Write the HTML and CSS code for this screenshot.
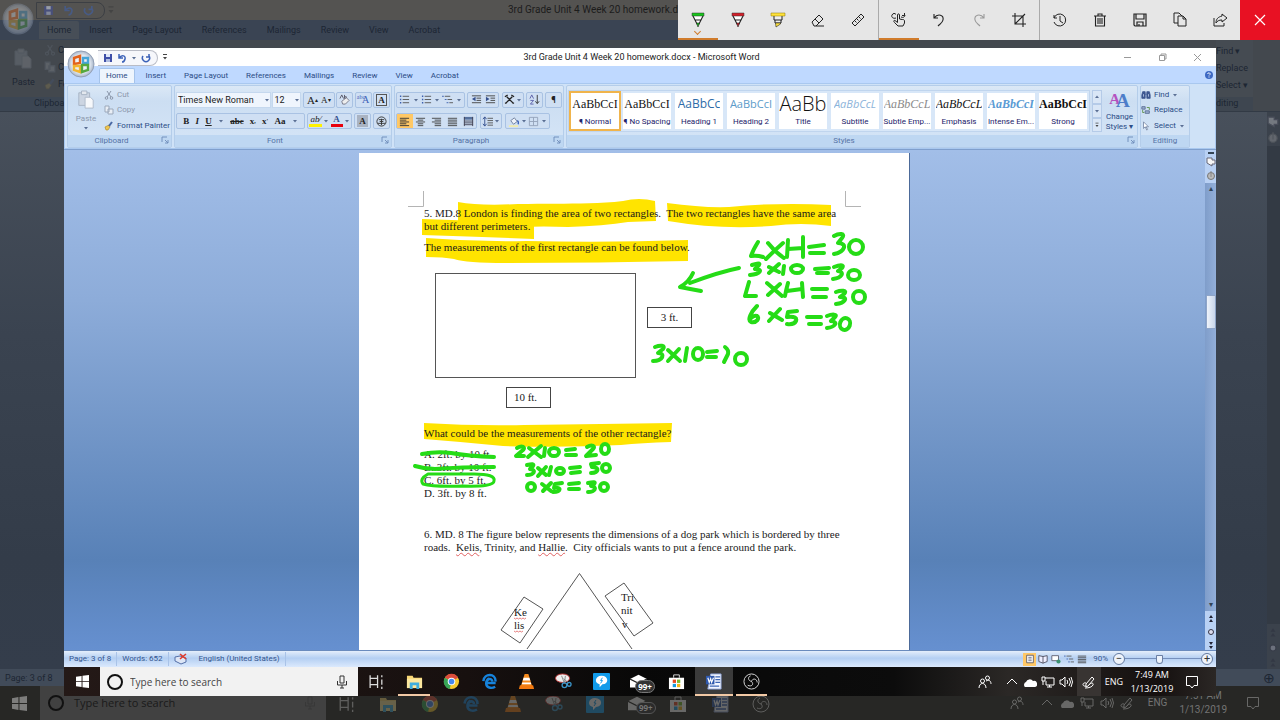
FILE: index.html
```html
<!DOCTYPE html>
<html lang="en">
<head>
<meta charset="utf-8">
<title>3rd Grade Unit 4 Week 20 homework.docx - Microsoft Word</title>
<link rel="stylesheet" href="styles.css">
</head>
<body>
<svg class="defs" aria-hidden="true">
  <defs>
    <radialGradient id="orb"><stop offset="0" stop-color="#fff"/><stop offset=".7" stop-color="#dfe6f0"/><stop offset="1" stop-color="#a9b6c9"/></radialGradient>
    <symbol id="office" viewBox="0 0 28 28"><circle cx="14" cy="14" r="13" fill="url(#orb)" stroke="#93a0b6"/><g fill="none" stroke-width="2.4"><path d="M7 8l6-2v7l-6 1z" stroke="#e3621c"/><path d="M16 8h5v5h-5z" stroke="#47a5d8"/><path d="M7 16h6v6l-6-2z" stroke="#f2b430"/><path d="M15 15h6v5l-6 2z" stroke="#55a83e"/></g></symbol>
    <symbol id="save" viewBox="0 0 10 10"><path d="M1 1h8v8H1z" fill="#3f4fa8"/><path d="M3 1h4v3H3z" fill="#dde6fa"/><path d="M3 6h4v3H3z" fill="#aebbe0"/></symbol>
    <symbol id="undo" viewBox="0 0 10 10"><path d="M2 1v4h4M2 5c3-4 7-2 6 1-.4 2-2 3-3 3" fill="none" stroke="#3c62b8" stroke-width="1.500"/></symbol>
    <symbol id="redo" viewBox="0 0 10 10"><path d="M2 3a3.600 3.600 0 1 0 6 0M8 1v3H5" fill="none" stroke="#3c62b8" stroke-width="1.500"/></symbol>
    <symbol id="more" viewBox="0 0 6 8"><path d="M1 1.500h4" stroke="#444"/><path d="M1 4h4l-2 2.500z" fill="#444"/></symbol>
    <symbol id="clip" viewBox="0 0 20 22"><path d="M2 3h12v14H2z" fill="#ccd5e2" stroke="#a6b2c3"/><path d="M5 1h6v4H5z" fill="#e3e8ee" stroke="#a6b2c3"/><path d="M9 8h6l3 3v9H9z" fill="#f6f8fb" stroke="#aeb9c8"/></symbol>
    <symbol id="cut" viewBox="0 0 10 10"><g fill="none" stroke="#8b97aa"><path d="M3 1l4 6M7 1L3 7"/><circle cx="2.500" cy="8" r="1.300"/><circle cx="7.500" cy="8" r="1.300"/></g></symbol>
    <symbol id="copy" viewBox="0 0 10 10"><g fill="#e9eef5" stroke="#9ba8ba"><path d="M1 1h4v6H1zM4 4h5v5H4z"/></g></symbol>
    <symbol id="brush" viewBox="0 0 10 10"><path d="M1 6l4-2 1 2-2 3H2z" fill="#efc652" stroke="#a88321" stroke-width=".6"/><path d="M5 5l3-4" stroke="#4968a4" stroke-width="2"/></symbol>
    <symbol id="launch" viewBox="0 0 8 8"><path d="M1 6V1h5M4 4l3 3M7 4v3H4" fill="none" stroke="#6c8ab8" stroke-width=".9"/></symbol>
    <symbol id="bullets" viewBox="0 0 12 12"><path d="M4 2.500h7M4 6h7M4 9.500h7" stroke="#555"/><path d="M1 2.500h1.500M1 6h1.500M1 9.500h1.500" stroke="#3b5fae" stroke-width="1.500"/></symbol>
    <symbol id="multi" viewBox="0 0 12 12"><path d="M3 2.500h6M6 6h5M8 9.500h4" stroke="#555"/><path d="M0 2.500h2M3 6h2M5 9.500h2" stroke="#3b5fae"/></symbol>
    <symbol id="outdent" viewBox="0 0 12 12"><path d="M1 2h10M6 4.500h5M6 7h5M1 9.500h10" stroke="#444"/><path d="M5 3v5L1 5.500z" fill="#35508e"/></symbol>
    <symbol id="indent" viewBox="0 0 12 12"><path d="M1 2h10M6 4.500h5M6 7h5M1 9.500h10" stroke="#444"/><path d="M1 3v5l4-2.500z" fill="#35508e"/></symbol>
    <symbol id="asian" viewBox="0 0 12 12"><path d="M1 3l3-2M8 1l3 2M2 10l7-7M3 3l7 7M1 10h2M9 10h2" stroke="#222" stroke-width="1.400"/></symbol>
    <symbol id="sort" viewBox="0 0 12 12"><path d="M1 5l2-4 2 4M1.500 7H5L1.500 11H5" fill="none" stroke="#5a5fa8"/><path d="M9 1v9M7 8l2 2.500L11 8" fill="none" stroke="#333"/></symbol>
    <symbol id="left" viewBox="0 0 12 12"><path d="M1 2.500h10M1 4.500h7M1 6.500h10M1 8.500h7M1 10.500h10" stroke="#333"/></symbol>
    <symbol id="center" viewBox="0 0 12 12"><path d="M1 2.500h10M3 4.500h6M1 6.500h10M3 8.500h6M3 10.500h6" stroke="#444"/></symbol>
    <symbol id="right" viewBox="0 0 12 12"><path d="M1 2.500h10M4 4.500h7M1 6.500h10M4 8.500h7M4 10.500h7" stroke="#444"/></symbol>
    <symbol id="just" viewBox="0 0 12 12"><path d="M1 2.500h10M1 4.500h10M1 6.500h10M1 8.500h10M1 10.500h10" stroke="#444"/></symbol>
    <symbol id="sheet" viewBox="0 0 12 12"><path d="M2 1.500h8v9H2z" fill="#fff" stroke="#556"/><path d="M4 4h4M4 6h4M4 8h4" stroke="#667"/></symbol>
    <symbol id="dist" viewBox="0 0 12 12"><path d="M1 1h10v3H1z" fill="#55709d"/><path d="M1 5.500h10M1 7.500h10M1 9.500h10M1.500 1v10M10.500 1v10" stroke="#445"/></symbol>
    <symbol id="spacing" viewBox="0 0 12 12"><path d="M6 2.500h6M6 5h6M6 7.500h6M6 10h6" stroke="#555"/><path d="M3 1v10M1 3.500L3 1l2 2.500M1 8.500L3 11l2-2.500" fill="none" stroke="#35508e"/></symbol>
    <symbol id="fill" viewBox="0 0 12 12"><path d="M3 5l4-3 3 4-4 3z" fill="#eef2fa" stroke="#6f7f9c"/><path d="M10 5c2 1 1 4 1 4" stroke="#3c62b8" stroke-width="1.500" fill="none"/><path d="M1 11h10" stroke="#f0ebb0" stroke-width="2"/></symbol>
    <symbol id="grid" viewBox="0 0 12 12"><path d="M1.500 1.500h9v9h-9zM6 1.500v9M1.500 6h9" fill="none" stroke="#94a2ba"/></symbol>
    <symbol id="eraseA" viewBox="0 0 12 12"><path d="M1 5l2-4 2 4M6 1v4h2V3H6" fill="none" stroke="#556"/><path d="M3 8l5-4 3 3-4 4H4z" fill="#eee" stroke="#778"/></symbol>
    <symbol id="find" viewBox="0 0 12 12"><path d="M2 2h3v8H1V6zM7 2h3l1 4v4H7zM5 5h2" fill="#3c5790" stroke="#3c5790"/><path d="M3 5v3M9 5v3" stroke="#b7c8e6"/></symbol>
    <symbol id="replace" viewBox="0 0 12 12"><path d="M1 2h4v3H1zM5 7h5v3H5z" fill="#9cb0d2" stroke="#56698e"/><path d="M2 6v3h2M7 3h3v3" fill="none" stroke="#578c3e"/></symbol>
    <symbol id="cursor" viewBox="0 0 12 12"><path d="M3 1v8l2-2 2 4 1-1-2-3h3z" fill="#fff" stroke="#7787a5"/></symbol>
    <symbol id="circled" viewBox="0 0 12 12"><circle cx="6" cy="6" r="5" fill="none" stroke="#333"/><path d="M3 4h6M4 6h4M2 8h8M6 3v7" stroke="#333"/></symbol>

    <symbol id="pen" viewBox="0 0 16 16"><path d="M3 4l4 8h2l4-8M5 8h6" fill="#fff" stroke="#222" stroke-width="1.100"/><path d="M2 1h12v3H2z" fill="currentColor" stroke="#333" stroke-width=".5"/><path d="M6.500 11h3L8 15z" fill="currentColor" stroke="#222" stroke-width=".6"/></symbol>
    <symbol id="marker" viewBox="0 0 16 16"><path d="M4 4v4h8V4M5 8v3h6V8" fill="#eee" stroke="#222"/><path d="M1 1h14v3H1z" fill="#ffe23b" stroke="#8a7600" stroke-width=".5"/><path d="M5.500 11h5v1L6 15z" fill="#ffe23b" stroke="#222" stroke-width=".6"/></symbol>
    <symbol id="eraser" viewBox="0 0 16 16"><path d="M2 10l7-7 4 4-7 7H4zM5 7l4 4M6 14h8" fill="none" stroke="#222"/></symbol>
    <symbol id="ruler" viewBox="0 0 16 16"><path d="M2 11l9-9 3 3-9 9zM5 9l1.500 1.500M7 7l1.500 1.500M9 5l1.500 1.500" fill="none" stroke="#222"/></symbol>
    <symbol id="touch" viewBox="0 0 16 16"><path d="M6.500 10.500L4 8.500c-1.500-.5-1.500 1-.5 2L7 14h5l1.500-3V8.500c-.5-1-1.500-1-2.500-1L8.500 7V3c0-1.500-2-1.500-2 0zM5 6C2 7 0 5 1 3s3-2 4-.500M10 5c2 1 4 0 4-2M13.500 1v2.500H11" fill="none" stroke="#222"/></symbol>
    <symbol id="back" viewBox="0 0 16 16"><path d="M3 2v4h4M3 6c4-5 10-3 9 2-.6 3-3 4-5 6" fill="none" stroke="currentColor" stroke-width="1.100"/></symbol>
    <symbol id="crop" viewBox="0 0 16 16"><path d="M4 1v11h11M1 4h11v11M4 12L14 2" fill="none" stroke="#222" stroke-width="1.100"/></symbol>
    <symbol id="history" viewBox="0 0 16 16"><path d="M2 3v3h3M2 6a6 6 0 1 1 0 4M8 4v5l3 2" fill="none" stroke="#222"/></symbol>
    <symbol id="trash" viewBox="0 0 16 16"><path d="M2 4h12M6 4V2h4v2M3.500 4v10h9V4M6 6v6M8 6v6M10 6v6" fill="none" stroke="#222" stroke-width="1.100"/></symbol>
    <symbol id="disk" viewBox="0 0 16 16"><path d="M2 2h12v12H3l-1-1zM4 2v5h8V2M5 14v-4h6v4M7 14v-2" fill="none" stroke="#222" stroke-width="1.200"/></symbol>
    <symbol id="pages" viewBox="0 0 16 16"><path d="M6 4h5l3 3v7H6zM11 4v3h3M6 11H2V1h5l3 3" fill="none" stroke="#222"/></symbol>
    <symbol id="share" viewBox="0 0 16 16"><path d="M10 2l5 4-5 4V8c-3 0-5 1-6 3 0-4 2-6 6-7zM2 6v8h10v-3" fill="none" stroke="#222"/></symbol>
    <symbol id="x" viewBox="0 0 16 16"><path d="M3 3l10 10M13 3L3 13" stroke="currentColor" stroke-width="1.200"/></symbol>

    <symbol id="win" viewBox="0 0 14 14"><path d="M0 2l6-1v5.600H0zM7 .9L14 0v6.600H7zM0 7.500h6V13l-6-1zM7 7.500h7V14l-7-.9z" fill="#fff"/></symbol>
    <symbol id="ring" viewBox="0 0 18 18"><circle cx="9" cy="9" r="7" fill="none" stroke="#111" stroke-width="2"/></symbol>
    <symbol id="mic" viewBox="0 0 12 14"><path d="M4 1h4v7H4zM1.500 6v4h9V6M6 10v3M4 13h4" fill="none" stroke="#333"/></symbol>
    <symbol id="tasks" viewBox="0 0 16 16"><path d="M2 2v12M9 2v12M2 5h7M2 11h7M13 2v2M13 6v5M13 13v2" fill="none" stroke="#ddd" stroke-width="1.200"/></symbol>
    <symbol id="folder" viewBox="0 0 18 18"><path d="M1 3h6l1 2h9v11H1z" fill="#f8d775"/><path d="M1 6h16v10H1z" fill="#fce79e"/><path d="M4 10h10v7h-3v-4H7v4H4z" fill="#3faede"/></symbol>
    <symbol id="chrome" viewBox="0 0 18 18"><circle cx="9" cy="9" r="8" fill="#f6c92f"/><path d="M9 9L2 5a8 8 0 0 1 14 0z" fill="#dc4c3b"/><path d="M9 9L2 5a8 8 0 0 0 5 12z" fill="#37a456"/><circle cx="9" cy="9" r="4" fill="#fff"/><circle cx="9" cy="9" r="3" fill="#4688ef"/></symbol>
    <symbol id="edge" viewBox="0 0 18 18"><path d="M15.500 10.500H6C6 5 12 5.500 12 9M15 14.500c-4 2.500-9.500 1-9.500-3.500 0-3 1.500-4.500 3-5.500M2.500 8.500C3.500 0 15.500 0 15.500 9" fill="none" stroke="#1683dc" stroke-width="2.600"/></symbol>
    <symbol id="vlc" viewBox="0 0 18 18"><path d="M7 1h4l4 13H3z" fill="#f58a1c"/><path d="M6 5h6l1 3H5zM4.500 10h9l.6 2H4z" fill="#fff"/><path d="M2 13h14l1 4H1z" fill="#f27a11"/></symbol>
    <symbol id="snip" viewBox="0 0 18 18"><ellipse cx="8" cy="5.500" rx="7.500" ry="4.500" fill="#eee" stroke="#b33"/><path d="M7 3l3 8M11 3l-1 8M9 6l6 5" stroke="#888"/><circle cx="10" cy="13" r="2.500" fill="none" stroke="#3b94c8" stroke-width="1.400"/><circle cx="15" cy="12" r="2" fill="none" stroke="#3b94c8" stroke-width="1.400"/></symbol>
    <symbol id="bubble" viewBox="0 0 18 18"><rect width="18" height="18" rx="1" fill="#119bea"/><path d="M9 3c8 0 8 9 1 9l-3 3v-3C1 11 2 3 9 3z" fill="#fff"/><path d="M10 5L8 8h2l-2 3" stroke="#119bea" fill="none"/></symbol>
    <symbol id="mail" viewBox="0 0 20 18"><path d="M0 6l10-5 10 5v10H0z" fill="#fff"/><path d="M0 6l10 5 10-5" fill="none" stroke="#222" stroke-width="1.500"/></symbol>
    <symbol id="store" viewBox="0 0 18 18"><path d="M6 5V2h6v3" stroke="#ddd" fill="none"/><path d="M1 5h16v12H1z" fill="#fff"/><path d="M5 7h3.500v3.500H5z" fill="#e74b24"/><path d="M9.500 7H13v3.500H9.500z" fill="#79b92b"/><path d="M5 11.500h3.500V15H5z" fill="#179be0"/><path d="M9.500 11.500H13V15H9.500z" fill="#f4b715"/></symbol>
    <symbol id="word" viewBox="0 0 18 18"><path d="M6 1h11v16H3z" fill="#f4f7ff" stroke="#8da4d8"/><path d="M11 4h5M11 7h5M11 10h5M5 14h10" stroke="#3d66b5" stroke-width="1.300"/><path d="M1 3h9v9H1z" fill="#2f59ae"/><path d="M3 5l1.500 5L6 6l1 4 2-5" stroke="#fff" fill="none" stroke-width="1.200"/></symbol>
    <symbol id="obs" viewBox="0 0 18 18"><g fill="none" stroke="#ddd"><circle cx="9" cy="9" r="8"/><path d="M9 9c-4-1-4-5-1-6M9 9c1-4 6-3 6 1M9 9c3 3 0 6-4 4"/></g></symbol>
    <symbol id="people" viewBox="0 0 14 14"><g fill="none" stroke="#fff"><circle cx="4.500" cy="6" r="2"/><path d="M1 13c0-6 7-6 7 0"/><circle cx="9.500" cy="3" r="2"/><path d="M8 6c4-2 5 1 5 3"/></g></symbol>
    <symbol id="up" viewBox="0 0 14 14"><path d="M2 9l5-5 5 5" fill="none" stroke="#fff"/></symbol>
    <symbol id="cloud" viewBox="0 0 14 14"><path d="M2 12a3 3 0 0 1 1-5 4 4 0 0 1 7-1 3 3 0 0 1 2 6z" fill="#fff"/></symbol>
    <symbol id="net" viewBox="0 0 14 14"><path d="M4 3h9v7H5V6M6 12h5M8.500 10v2M1 2h3v4H1zM2 6v4" fill="none" stroke="#fff"/></symbol>
    <symbol id="sound" viewBox="0 0 14 14"><path d="M1 5h2l3-3v10L3 9H1zM8 5q1.500 2 0 4M10 3q3 4 0 8M12 2q3 5 0 10" fill="none" stroke="#fff"/></symbol>
    <symbol id="ink" viewBox="0 0 14 14"><path d="M4 9l6-7 2 2-6 7-2 1zM4 8C0 7 0 12 4 11M7 10c2-3 5-2 4 0s-4 3-8 3" fill="none" stroke="#fff"/></symbol>
    <symbol id="note" viewBox="0 0 14 14"><path d="M1.500 1.500h11v9H9l-2 2.500-2-2.500H1.500z" fill="none" stroke="#fff"/></symbol>
    <symbol id="dd" viewBox="0 0 6 6"><path d="M1 2h4L3 4.500z" fill="#5b6f94"/></symbol>
    <symbol id="rul" viewBox="0 0 10 10"><path d="M1 1h5v2h3v4H6v2L1 6z" fill="#f7f7f7" stroke="#667"/></symbol>
    <symbol id="ball" viewBox="0 0 10 10"><circle cx="5" cy="6" r="3.500" fill="#bbb" stroke="#777"/><path d="M5 1v6" stroke="#888"/></symbol>
    <symbol id="dbl" viewBox="0 0 10 10"><path d="M5 1l2 3H3zM5 5l2 3H3z" fill="#223"/></symbol>
    <symbol id="dot" viewBox="0 0 10 10"><circle cx="5" cy="5" r="2.500" fill="#dde" stroke="#334"/></symbol>
    <symbol id="proof" viewBox="0 0 14 12"><path d="M1 4l5-1 6 2v4l-5 2-6-3z" fill="#dde6f6" stroke="#5570a8"/><path d="M6 1l6 5M12 1L6 6" stroke="#e03a2a" stroke-width="1.600"/></symbol>
  </defs>
</svg>

<div class="backdrop" aria-hidden="true">
  <div class="b-title"><svg class="b-orb"><use href="#office"/></svg><span class="b-quick"><svg><use href="#save"/></svg><svg><use href="#undo"/></svg><svg><use href="#redo"/></svg></span><svg class="b-more"><use href="#more"/></svg><span class="b-name">3rd Grade Unit 4 Week 20 homework.d</span></div>
  <div class="b-tabs"><span class="on">Home</span><span>Insert</span><span>Page Layout</span><span>References</span><span>Mailings</span><span>Review</span><span>View</span><span>Acrobat</span></div>
  <div class="b-ribbon">
    <div class="b-clip"><div class="b-cliprow"><div class="b-paste"><svg><use href="#clip"/></svg>Paste</div><div class="b-list"><span><svg><use href="#cut"/></svg>C</span><span><svg><use href="#copy"/></svg>C</span><span><svg><use href="#brush"/></svg>Fo</span></div></div><div class="b-label">Clipboa</div></div>
    <div class="b-edit"><div class="b-list"><span>Find ▾</span><span>Replace</span><span>Select ▾</span></div><div class="b-label">diting</div></div>
  </div>
  <div class="b-work"><div class="b-scroll"><svg><use href="#rul"/></svg><svg><use href="#ball"/></svg><i></i><svg><use href="#dbl"/></svg><svg><use href="#dot"/></svg><svg><use href="#dbl"/></svg></div></div>
  <div class="b-status"><span>Page: 3 of 8</span><span class="b-plus">⊕</span></div>
  <div class="b-task">
    <span class="b-start"><svg><use href="#win"/></svg></span>
    <span class="b-search"><svg><use href="#ring"/></svg>Type here to search<svg class="b-mic"><use href="#mic"/></svg></span>
    <span class="b-apps"><svg><use href="#tasks"/></svg><svg><use href="#folder"/></svg><svg><use href="#chrome"/></svg><svg><use href="#edge"/></svg><svg><use href="#vlc"/></svg><svg><use href="#snip"/></svg><svg><use href="#bubble"/></svg><span class="b-mail"><svg><use href="#mail"/></svg><em>99+</em></span><svg><use href="#store"/></svg><svg><use href="#word"/></svg><svg><use href="#obs"/></svg></span>
    <span class="b-tray"><svg class="far"><use href="#people"/></svg><svg><use href="#up"/></svg><svg><use href="#cloud"/></svg><svg><use href="#net"/></svg><svg><use href="#sound"/></svg><svg><use href="#ink"/></svg><b>ENG</b><b class="b-clock">7:51 AM<br>1/13/2019</b><svg><use href="#note"/></svg></span>
  </div>
</div>

<main class="capture">
  <header class="title">
    <button class="orb" aria-label="Office"><svg><use href="#office"/></svg></button>
    <div class="quick"><button aria-label="Save"><svg><use href="#save"/></svg></button><button aria-label="Undo"><svg><use href="#undo"/></svg></button><svg class="dd"><use href="#dd"/></svg><button aria-label="Redo"><svg><use href="#redo"/></svg></button></div>
    <button class="custom" aria-label="Customize"><svg><use href="#more"/></svg></button>
    <h1>3rd Grade Unit 4 Week 20 homework.docx - Microsoft Word</h1>
    <div class="wbtns"><button aria-label="Minimize"><svg viewBox="0 0 9 9"><path d="M1 4.500h7"/></svg></button><button aria-label="Restore"><svg viewBox="0 0 9 9"><path d="M1.500 2.500h5v5h-5zM3 2.500V1h5v5H6.500"/></svg></button><button aria-label="Close"><svg viewBox="0 0 9 9"><path d="M1 1l7 7M8 1L1 8"/></svg></button></div>
  </header>
  <nav class="tabs"><button class="on">Home</button><button>Insert</button><button>Page Layout</button><button>References</button><button>Mailings</button><button>Review</button><button>View</button><button>Acrobat</button><button class="help" aria-label="Help"><svg viewBox="0 0 8 8"><circle cx="4" cy="4" r="4" fill="#3d69c4"/><path d="M2.500 3C3 1 6 2 5 3.500L4 4.500M4 5.500v1" fill="none" stroke="#fff"/></svg></button></nav>
  <section class="ribbon">
    <div class="group clipboard">
      <div class="body">
        <button class="paste"><svg><use href="#clip"/></svg>Paste<svg class="dd"><use href="#dd"/></svg></button>
        <div class="cmds"><button class="off"><svg><use href="#cut"/></svg>Cut</button><button class="off"><svg><use href="#copy"/></svg>Copy</button><button><svg><use href="#brush"/></svg>Format Painter</button></div>
      </div>
      <div class="label">Clipboard<svg><use href="#launch"/></svg></div>
    </div>
    <div class="group font">
      <div class="body rows">
        <div class="row">
          <span class="combo wide"><select aria-label="Font"><option>Times New Roman</option></select><svg class="dd"><use href="#dd"/></svg></span>
          <span class="combo size"><select aria-label="Font size"><option>12</option></select><svg class="dd"><use href="#dd"/></svg></span>
          <span class="set two"><button class="serif big">A<sup>▴</sup></button><button class="serif">A<sup>▾</sup></button></span>
          <span class="set one"><button aria-label="Clear formatting"><svg><use href="#eraseA"/></svg></button></span>
          <span class="set one"><button class="serif phon"><sup>abc</sup>A</button></span>
          <span class="set one"><button class="serif boxed">A</button></span>
        </div>
        <div class="row">
          <span class="set fmt"><button class="serif"><b>B</b></button><button class="serif"><i>I</i></button><button class="serif"><u>U</u></button><svg class="dd"><use href="#dd"/></svg><button class="serif"><s>abc</s></button><button class="serif">x<sub>,</sub></button><button class="serif">x<sup>'</sup></button><button class="serif">Aa</button><svg class="dd"><use href="#dd"/></svg></span>
          <span class="set cols"><button class="serif hl">ab⁄</button><svg class="dd"><use href="#dd"/></svg><button class="serif fc">A</button><svg class="dd"><use href="#dd"/></svg></span>
          <span class="set one"><button class="serif shade">A</button></span>
          <span class="set one"><button aria-label="Enclose characters"><svg><use href="#circled"/></svg></button></span>
        </div>
      </div>
      <div class="label">Font<svg><use href="#launch"/></svg></div>
    </div>
    <div class="group para">
      <div class="body rows">
        <div class="row">
          <span class="set lists"><button aria-label="Bullets"><svg><use href="#bullets"/></svg></button><svg class="dd"><use href="#dd"/></svg><button aria-label="Numbering"><svg><use href="#bullets"/></svg></button><svg class="dd"><use href="#dd"/></svg><button aria-label="Multilevel list"><svg><use href="#multi"/></svg></button><svg class="dd"><use href="#dd"/></svg></span>
          <span class="set two"><button aria-label="Decrease indent"><svg><use href="#outdent"/></svg></button><button aria-label="Increase indent"><svg><use href="#indent"/></svg></button></span>
          <span class="set mid"><button aria-label="Asian layout"><svg><use href="#asian"/></svg></button><svg class="dd"><use href="#dd"/></svg></span>
          <span class="set one"><button aria-label="Sort"><svg><use href="#sort"/></svg></button></span>
          <span class="set one"><button class="mark">¶</button></span>
        </div>
        <div class="row start">
          <span class="set align"><button class="sel" aria-label="Align left"><svg><use href="#left"/></svg></button><button aria-label="Center"><svg><use href="#center"/></svg></button><button aria-label="Align right"><svg><use href="#right"/></svg></button><button aria-label="Justify"><svg><use href="#just"/></svg></button><button aria-label="Distribute"><svg><use href="#dist"/></svg></button></span>
          <span class="set mid"><button aria-label="Line spacing"><svg><use href="#spacing"/></svg></button><svg class="dd"><use href="#dd"/></svg></span>
          <span class="set cols"><button aria-label="Shading"><svg><use href="#fill"/></svg></button><svg class="dd"><use href="#dd"/></svg><button aria-label="Borders"><svg><use href="#grid"/></svg></button><svg class="dd"><use href="#dd"/></svg></span>
        </div>
      </div>
      <div class="label">Paragraph<svg><use href="#launch"/></svg></div>
    </div>
    <div class="group styles">
      <div class="body">
        <div class="gallery">
          <button class="tile picked"><span class="sm serif">AaBbCcI</span>¶ Normal</button>
          <button class="tile"><span class="sm serif">AaBbCcI</span>¶ No Spacing</button>
          <button class="tile"><span class="sm h1">AaBbCc</span>Heading 1</button>
          <button class="tile"><span class="sm h2">AaBbCcI</span>Heading 2</button>
          <button class="tile"><span class="sm ttl">AaBb</span>Title</button>
          <button class="tile"><span class="sm sub">AaBbCcL</span>Subtitle</button>
          <button class="tile"><span class="sm serif subtle">AaBbCcL</span>Subtle Emp...</button>
          <button class="tile"><span class="sm serif emph">AaBbCcL</span>Emphasis</button>
          <button class="tile"><span class="sm serif intense">AaBbCcI</span>Intense Em...</button>
          <button class="tile"><span class="sm serif strong">AaBbCcI</span>Strong</button>
        </div>
        <div class="gscroll"><button aria-label="Previous styles"><svg class="dd flip"><use href="#dd"/></svg></button><button aria-label="Next styles"><svg class="dd"><use href="#dd"/></svg></button><button aria-label="More styles"><svg class="dd"><use href="#more"/></svg></button></div>
        <button class="change"><span class="aa serif"><i>A</i>A</span><span>Change<br>Styles ▾</span></button>
      </div>
      <div class="label">Styles<svg><use href="#launch"/></svg></div>
    </div>
    <div class="group editing">
      <div class="body"><div class="cmds"><button><svg><use href="#find"/></svg>Find<svg class="dd"><use href="#dd"/></svg></button><button><svg><use href="#replace"/></svg>Replace</button><button><svg><use href="#cursor"/></svg>Select<svg class="dd"><use href="#dd"/></svg></button></div></div>
      <div class="label">Editing</div>
    </div>
  </section>

  <section class="work">
    <div class="view">
      <article class="page">
        <svg class="under" viewBox="359 153 551 497" aria-hidden="true">
          <path d="M408 206.500h15.500V191M845.500 191v15.500H861" fill="none" stroke="#b4b4b4"/>
          <g fill="#ffe400">
            <path d="M458 202q22 4 60 2c40-1 70 1 105-3q16-4 32 0l1 20-28 1q-24 4-60 5-24-1-48 0l-62-6z"/>
            <path d="M422 219q56 2 112 3v17q-50-2-112-4z"/>
            <path d="M667 203q36 5 62 4 50-5 102-2v21q-30-4-60 0-50 4-103-5z"/>
            <path d="M426 238q50 4 100 3 80 2 162-1v21q-90 2-182 2-40 0-52-4-10-2-28-2z"/>
            <path d="M424 423q50 3 100 2 80-1 148-2l-1 19q-30 1-50 3-60 3-118 1-40-4-79-7z"/>
          </g>
        </svg>
        <p>5. MD.8 London is finding the area of two rectangles.&nbsp; The two rectangles have the same area<br>but different perimeters.</p>
        <p class="lead">The measurements of the first rectangle can be found below.</p>
        <div class="figure"><div class="rect"></div><div class="dim">3 ft.</div><div class="dim low">10 ft.</div></div>
        <p>What could be the measurements of the other rectangle?</p>
        <ul><li>A. 2ft. by 10 ft.</li><li>B. 3ft. by 10 ft.</li><li>C. 6ft. by 5 ft.</li><li>D. 3ft. by 8 ft.</li></ul>
        <p class="six">6. MD. 8 The figure below represents the dimensions of a dog park which is bordered by three<br>roads.&nbsp; <span class="sp">Kelis</span>, Trinity, and <span class="sp">Hallie</span>.&nbsp; City officials wants to put a fence around the park.</p>
        <svg class="park" viewBox="424 565 422 85">
          <g fill="none" stroke="#555"><path d="M527 650l52.500-75.500L632 650M524 598l19 12-23 34-19-13zM605 597l19-13 29 40-19 13z"/></g>
          <text x="514" y="617">Ke</text><text x="514" y="630">lis</text>
          <path d="M514 619l1.500 1 1.500-1 1.500 1 1.500-1 1.500 1 1.500-1 1.500 1 1.500-1M514 632l1.500 1 1.500-1 1.500 1 1.500-1 1.500 1 1.500-1" fill="none" stroke="#e06060" stroke-width=".8"/>
          <text x="621" y="602">Tri</text><text x="621" y="615">nit</text><text x="622" y="629">v</text>
        </svg>
        <svg class="over" viewBox="359 153 551 497" role="img" aria-label="Handwritten working in green ink">
          <g fill="none" stroke="#25dc16" stroke-width="4" stroke-linecap="round" stroke-linejoin="round">
            <path d="M758 242q-5 8-7 14 6-1 12 1M768 243q7 9 16 15M783 243q-8 7-17 16M788 240l-1 17M803 237v20M788 249l15-1M809 247l15-2M810 253h14M834 236c5-3 12-3 8 2l-4 5c10 0 7 9-4 11"/>
            <ellipse cx="856" cy="247" rx="7" ry="7"/>
            <path d="M752 265q9-3 7 0l-4 4c9 0 5 5-5 6M769 267l10 5M779 264l-10 9M784 266l-1 8M815 269l14-1M817 273h11M834 267c5-2 11-3 8 1l-4 3c7 1 4 7-5 8"/>
            <ellipse cx="797" cy="269" rx="6" ry="4"/><ellipse cx="854" cy="275" rx="6" ry="5"/>
            <path d="M749 282l-4 14h11M767 283l15 13M780 284l-12 11M788 283q-2 7-3 13M802 283l1 14M787 291l15-2M812 289h15M813 297h13M836 292c5-2 12-2 8 2l-4 3c9 0 5 6-4 7"/>
            <ellipse cx="859" cy="297" rx="6" ry="6"/>
            <path d="M757 306c-6 6-10 14-6 16 6 1 9-4 6-6q-3-1-6 2M770 313l12 7M780 309l-11 12M797 311l-9 1-1 5c8-1 10 1 9 4q-2 4-9 3M807 317h14M809 324h12M827 316c5-2 11-2 8 1l-4 4c8 1 4 6-4 7"/>
            <ellipse cx="845" cy="324" rx="5" ry="6" transform="rotate(20 845 324)"/>
            <path d="M739 268q-20 4-49 15M693 273q-4 9-13 14 10 2 21 4"/>
            <path d="M655 347c5-2 11-2 8 2l-5 4c8 0 5 8-5 8M668 350l12 11M679 349l-11 12M687 348l-2 13M707 352l10-1M707 357h9M725 347q4 3 3 7l-4 8"/>
            <ellipse cx="698" cy="354" rx="5" ry="6"/><ellipse cx="741" cy="359" rx="6" ry="6"/>
            <path d="M517 448c5-3 9-1 6 2l-7 6h8M529 448l12 9M541 446l-13 11M545 448l-1 8M566 450l9-1M566 455h10M587 447c5-3 9-1 6 2l-7 7 10-1"/>
            <ellipse cx="554" cy="452" rx="5" ry="4"/><ellipse cx="605" cy="449" rx="4" ry="5"/>
            <path d="M527 465q8-2 6 1l-3 3c7 1 4 6-3 6M538 468l8 7M546 467l-8 9M551 467l-2 8M570 468l10-1M571 473l9-1M599 463l-8 1 1 3c8 0 7 6-1 6"/>
            <ellipse cx="560" cy="471" rx="4" ry="3"/><ellipse cx="606" cy="468" rx="4" ry="4"/>
            <path d="M542 484l9 7M551 483l-8 8M562 483l-7 1-1 4c8-1 7 4-1 4M569 484l10-1M569 489h10M588 483q9-2 6 1l-3 2c7 1 4 6-3 6"/>
            <ellipse cx="531" cy="487" rx="4" ry="4"/><ellipse cx="604" cy="487" rx="4" ry="4"/>
            <path d="M422 454q15-3 29-1 17 3 43 4M415 466q10 3 20 3 26-2 59-2"/>
            <path stroke-width="3" d="M428 474q-9 5-5 10 10 3 40 2 31 1 31-5 2-7-20-7z"/>
          </g>
        </svg>
      </article>
    </div>
    <div class="scroll"><i class="split"></i><svg><use href="#rul"/></svg><svg><use href="#ball"/></svg><div class="track"><span>▴</span><i class="thumb"></i><span>▾</span></div><svg><use href="#dbl"/></svg><svg><use href="#dot"/></svg><svg class="flip"><use href="#dbl"/></svg></div>
  </section>

  <footer class="status">
    <span>Page: 3 of 8</span><span>Words: 652</span><span class="proof"><svg><use href="#proof"/></svg></span><span class="lang">English (United States)</span>
    <div class="views"><button class="sel" aria-label="Print layout"><svg><use href="#sheet"/></svg></button><button aria-label="Full screen reading"><svg viewBox="0 0 12 12"><path d="M1 2l5 1 5-1v7l-5 2-5-2zM6 3v8" fill="#eef" stroke="#445"/></svg></button><button aria-label="Web layout"><svg viewBox="0 0 12 12"><path d="M1 2h8v6H1z" fill="#fff" stroke="#556"/><circle cx="9" cy="9" r="2.500" fill="#3b9272"/></svg></button><button aria-label="Outline"><svg><use href="#multi"/></svg></button><button aria-label="Draft"><svg><use href="#just"/></svg></button></div>
    <label for="zoom">90%</label><button class="round">−</button><input id="zoom" type="range" min="10" max="190" value="92"><button class="round">+</button>
  </footer>

  <div class="taskbar">
    <button class="startb" aria-label="Start"><svg><use href="#win"/></svg></button>
    <label class="search"><svg><use href="#ring"/></svg><input type="text" placeholder="Type here to search" aria-label="Search"><svg class="mic"><use href="#mic"/></svg></label>
    <div class="apps"><button aria-label="Task view"><svg><use href="#tasks"/></svg></button><button class="open" aria-label="File Explorer"><svg><use href="#folder"/></svg></button><button aria-label="Chrome"><svg><use href="#chrome"/></svg></button><button aria-label="Edge"><svg><use href="#edge"/></svg></button><button aria-label="VLC"><svg><use href="#vlc"/></svg></button><button aria-label="Snipping Tool"><svg><use href="#snip"/></svg></button><button aria-label="Messenger"><svg><use href="#bubble"/></svg></button><button class="mailb" aria-label="Mail"><svg><use href="#mail"/></svg><em>99+</em></button><button aria-label="Store"><svg><use href="#store"/></svg></button><button class="open active" aria-label="Word"><svg><use href="#word"/></svg></button><button class="open" aria-label="OBS"><svg><use href="#obs"/></svg></button></div>
    <div class="tray"><svg class="far"><use href="#people"/></svg><svg><use href="#up"/></svg><svg><use href="#cloud"/></svg><svg><use href="#net"/></svg><svg><use href="#sound"/></svg><span class="inkbox"><svg><use href="#ink"/></svg></span><b>ENG</b><time>7:49 AM<br>1/13/2019</time><svg class="nt"><use href="#note"/></svg></div>
  </div>
</main>

<div class="tools" role="toolbar">
  <button class="on green" aria-label="Ballpoint pen"><svg><use href="#pen"/></svg><i></i></button><button class="red" aria-label="Pencil"><svg><use href="#pen"/></svg></button><button aria-label="Highlighter"><svg><use href="#marker"/></svg></button><button aria-label="Eraser"><svg><use href="#eraser"/></svg></button><button aria-label="Ruler"><svg><use href="#ruler"/></svg></button>
  <hr><button class="on" aria-label="Touch writing"><svg><use href="#touch"/></svg></button><button aria-label="Undo"><svg><use href="#back"/></svg></button><button class="dim-btn" aria-label="Redo"><svg><use href="#back"/></svg></button><button aria-label="Crop"><svg><use href="#crop"/></svg></button>
  <hr><button aria-label="History"><svg><use href="#history"/></svg></button><button aria-label="Delete"><svg><use href="#trash"/></svg></button><button aria-label="Save as"><svg><use href="#disk"/></svg></button><button aria-label="Copy"><svg><use href="#pages"/></svg></button><button aria-label="Share"><svg><use href="#share"/></svg></button><button class="shut" aria-label="Close"><svg><use href="#x"/></svg></button>
</div>
</body>
</html>
```
FILE: styles.css
```css
* { box-sizing: border-box; }
body {
  margin: 0; min-height: 100vh; padding: 48px 64px 24px; display: flex; overflow: hidden;
  position: relative; background: #3a4350;
  font: 8px/12px Roboto, "Noto Sans", sans-serif; color: #2b4c86;
}
button { appearance: none; border: 0; padding: 0; margin: 0; background: none; font: inherit; color: inherit; display: flex; align-items: center; justify-content: center; }
svg { display: block; flex: none; }
.defs { position: absolute; width: 0; height: 0; }
.serif { font-family: "Liberation Serif", serif; }
.dd { width: 6px; height: 6px; }

/* dimmed desktop behind the capture */
.backdrop { position: absolute; inset: 0; display: flex; flex-direction: column; background: #3a4350; color: #1d2633; font-size: 9px; }
.backdrop svg { opacity: .3; width: 12px; height: 12px; }
.b-title { height: 20px; display: flex; align-items: center; background: #545351; position: relative; padding-left: 36px; }
.backdrop .b-orb { position: absolute; left: 2px; top: 3px; width: 32px; height: 32px; opacity: .35; z-index: 1; }
.b-quick { display: flex; gap: 9px; width: 69px; height: 17px; padding-left: 6px; align-items: center; border: 1px solid #3c3f44; border-radius: 0 8px 8px 0; }
.backdrop .b-quick svg { width: 11px; height: 11px; opacity: .5; }
.backdrop .b-more { margin-left: 2px; width: 8px; height: 10px; opacity: 1; }
.b-name { margin-left: 393px; color: #1c1c1c; white-space: nowrap; font-size: 10px; }
.b-tabs { height: 20px; display: flex; align-items: center; background: #3a4453; padding-left: 39px; }
.b-tabs span { padding: 3px 10px; white-space: nowrap; }
.b-tabs .on { background: #474e57; padding: 3px 8px; border-radius: 2px 2px 0 0; }
.b-ribbon { height: 72px; background: #43484e; display: flex; justify-content: space-between; border-bottom: 1px solid #323a45; }
.b-clip { width: 118px; display: flex; flex-direction: column; justify-content: space-between; }
.b-cliprow { display: flex; padding: 4px 0 0 12px; gap: 9px; }
.b-paste { display: flex; flex-direction: column; align-items: center; gap: 6px; padding-top: 4px; }
.b-paste svg { width: 20px; height: 22px; }
.backdrop .b-paste svg, .backdrop .b-list svg { opacity: .15; }
.b-list { display: flex; flex-direction: column; gap: 5px; }
.b-list span { display: flex; gap: 2px; }
.b-label { background: #3c4653; height: 14px; padding-left: 34px; }
.b-edit { width: 37px; padding: 5px 0 0; margin-right: 27px; display: flex; flex-direction: column; justify-content: space-between; background: #454b52; }
.b-edit .b-label { background: #3e4650; padding-left: 0; }
.b-edit .b-list { white-space: nowrap; }
.b-work { flex: 1; display: flex; justify-content: flex-end; background: linear-gradient(#48505b, #3a4350 40%, #333c49 80%, #343d4b); }
.b-scroll { width: 13px; padding-top: 4px; display: flex; flex-direction: column; background: #3b424c; gap: 3px; }
.b-scroll i { flex: 1; background: #333a44; }
.b-status { height: 17px; display: flex; justify-content: space-between; align-items: center; background: #414b59; padding: 0 5px; }
.b-plus { font-size: 14px; }
.b-task { height: 34px; display: flex; background: #272725; color: #747474; align-items: flex-start; overflow: hidden; }
.b-start { width: 40px; height: 34px; padding: 10px 0 0 12px; }
.backdrop .b-start svg { width: 15px; height: 15px; opacity: .4; }
.b-search { width: 286px; height: 34px; background: #414141; display: flex; align-items: center; gap: 9px; padding: 0 10px 0 7px; font: 11px/14px "Open Sans", sans-serif; color: #1a1a1a; }
.backdrop .b-search svg { width: 18px; height: 18px; opacity: 1; }
.backdrop .b-search .b-mic { margin-left: auto; width: 12px; height: 14px; opacity: .6; }
.b-apps { display: flex; width: 456px; justify-content: space-around; height: 34px; padding-top: 9px; }
.backdrop .b-apps svg { width: 18px; height: 18px; }
.b-mail { position: relative; }
.b-mail em { position: absolute; left: 8px; top: 7px; padding: 0 2px; border: 1px solid #555; border-radius: 7px; background: #2b2b2b; font: bold 8px/10px "Open Sans", sans-serif; }
.b-tray { margin-left: auto; display: flex; gap: 6px; padding: 3px 20px 0 0; align-items: center; font-size: 10px; line-height: 14px; }
.backdrop .b-tray svg { width: 14px; height: 14px; }
.backdrop .b-tray .far { margin-right: 10px; }
.b-tray b { font-weight: 400; text-align: center; margin-left: 8px; }
.b-tray .b-clock { margin-right: 13px; margin-left: 6px; }

/* captured window */
.capture { position: relative; flex: 1; min-width: 0; display: flex; flex-direction: column; background: #bfd8fb; }
.title { height: 18px; display: flex; align-items: center; background: #fff; position: relative; padding-left: 34px; }
.orb { position: absolute; left: 3px; top: 2px; z-index: 2; }
.orb svg { width: 28px; height: 28px; }
.quick { height: 16px; width: 60px; margin-top: 1px; display: flex; align-items: center; gap: 4px; padding-left: 5px; border: 1px solid #b9bcc6; border-left: 0; border-radius: 0 8px 8px 0; background: #f6f7fb; }
.quick svg { width: 10px; height: 10px; }
.quick .dd { width: 6px; height: 6px; }
.custom { margin-left: 4px; }
.custom svg { width: 6px; height: 8px; }
.title h1 { flex: 1; margin: 0; padding-right: 8px; font-size: 9px; line-height: 16px; font-weight: 400; color: #222; text-align: center; white-space: nowrap; }
.wbtns { display: flex; gap: 26px; padding-right: 14px; }
.wbtns svg { width: 9px; height: 9px; fill: none; stroke: #999; }
.tabs { display: flex; align-items: flex-end; height: 17px; padding-left: 35px; background: #bfd9ff; }
.tabs button { height: 15px; padding: 0 9px; white-space: nowrap; }
.tabs .on { padding: 0 6px; margin-right: 2px; border-radius: 2px 2px 0 0; background: #eef5fd; border: 1px solid #a5c3ea; border-bottom: 0; }
.tabs .help { margin: 0 3px 4px auto; padding: 0; width: 8px; height: 8px; }
.help svg { width: 8px; height: 8px; }
.ribbon { display: flex; gap: 2px; height: 66px; padding: 1px 25px 0 2px; background: #cfe2f7; border: 1px solid #a9c8ef; }
.group { display: flex; flex-direction: column; border: 1px solid #b4cdea; border-radius: 2px; background: linear-gradient(#dbe8f6, #ccdef2 25%, #d5e5f7); }
.body { flex: 1; display: flex; min-height: 0; }
.label { height: 12px; display: flex; justify-content: center; align-items: center; background: #bed7f2; color: #5673a5; position: relative; padding-right: 16px; }
.label svg { position: absolute; right: 2px; top: 1px; width: 8px; height: 8px; }
.clipboard { width: 105px; }
.font { width: 218px; }
.para { width: 170px; }
.styles { flex: 1; min-width: 0; }
.editing { width: 50px; }
.editing .label { padding-right: 0; }
.paste { width: 36px; flex-direction: column; color: #8d99ad; }
.paste > svg:first-child { width: 18px; height: 20px; margin-bottom: 3px; }
.cmds { display: flex; flex-direction: column; justify-content: space-around; padding: 1px 0; }
.cmds button { justify-content: flex-start; gap: 3px; white-space: nowrap; }
.cmds svg { width: 10px; height: 10px; }
.cmds .dd { width: 6px; height: 6px; }
.cmds .off { color: #8d99ad; }
.rows { flex-direction: column; justify-content: space-evenly; padding: 0 1px; }
.row { display: flex; justify-content: space-between; height: 16px; }
.row.start { justify-content: flex-start; gap: 3px; }
.combo { display: flex; align-items: center; background: #eff5fd; border: 1px solid #c5d8ee; }
.combo select { appearance: none; border: 0; background: none; font: inherit; font-size: 9px; color: #222; padding: 0 1px; margin: 0; flex: 1; min-width: 0; }
.wide { width: 95px; }
.size { width: 29px; }
.set { display: flex; align-items: center; justify-content: space-evenly; border: 1px solid #a9c2e3; border-radius: 2px; background: #cfdff3; color: #222; }
.set svg { width: 11px; height: 11px; }
.set .dd { width: 6px; height: 6px; }
.set button { font-size: 9px; line-height: 12px; }
.set sup, .set sub { font-size: 6px; line-height: 6px; }
.set .big { font-size: 11px; }
.set .phon { color: #3c62b8; font-size: 10px; }
.phon sup { margin-right: -3px; margin-bottom: 5px; }
.two { width: 32px; }
.one { width: 17px; }
.mid { width: 22px; }
.fmt { width: 129px; font-weight: 700; }
.cols { width: 45px; }
.lists { width: 69px; }
.align { width: 81px; }
.boxed { border: 1px solid #555; width: 11px; height: 12px; font-weight: 700; }
.shade { background: #a9b3c2; width: 11px; font-weight: 700; }
.hl { border-bottom: 3px solid #fff200; width: 13px; font-style: italic; }
.fc { border-bottom: 3px solid #e8000d; width: 12px; font-weight: 700; }
.set .hl, .set .fc { line-height: 9px; }
.set .fc { color: #35508e; }
.mark { font-weight: 700; }
.sel { background: #ffc866; }
.align .sel, .align button { width: 16px; height: 14px; }
.styles .body { padding: 4px 2px 3px 1px; gap: 2px; }
.gallery { flex: 1; min-width: 0; display: grid; grid-template-columns: repeat(10, minmax(0, 1fr)); border: 1px solid #c0d5ee; background: #d8e7f8; }
.tile { flex-direction: column; overflow: hidden; background: #fff; margin: 2px; color: #22226a; white-space: nowrap; justify-content: space-between; padding-bottom: 1px; }
.picked { margin: 0; border: 2px solid #f0b44c; }
.sm { font-size: 12px; line-height: 22px; height: 22px; color: #111; max-width: 100%; overflow-x: clip; }
.sm.h1, .sm.h2, .ttl, .sub { font-family: "Open Sans", sans-serif; }
.sm.h1 { color: #2e6ba8; }
.sm.h2 { color: #5b9bc9; font-size: 11px; }
.ttl { font-size: 20px; font-weight: 300; }
.sub { font-size: 11px; font-style: italic; color: #8bb3da; }
.subtle { font-style: italic; color: #8b8b8b; }
.emph { font-style: italic; }
.intense { font-style: italic; font-weight: 700; color: #5a9bd4; }
.strong { font-weight: 700; }
.gscroll { width: 10px; display: flex; flex-direction: column; }
.gscroll button { flex: 1; border: 1px solid #b5cbe8; background: #d9e6f6; }
.change { width: 31px; flex-direction: column; line-height: 10px; }
.aa { font-size: 19px; line-height: 22px; color: #4d7dc9; font-weight: 700; display: flex; }
.aa i { color: #b552c0; font-size: 15px; line-height: 18px; margin-right: -4px; font-style: normal; }

/* document area */
.work { flex: 1; display: flex; min-height: 0; border-top: 1px solid #7f9fcd; }
.view { flex: 1; display: flex; justify-content: center; overflow: hidden; padding-top: 3px; background: linear-gradient(#a2bee8, #8dacd9 30%, #5881b7 82%, #6690d0); }
.page { position: relative; width: 551px; height: 497px; flex: none; overflow: hidden; background: #fff; border-right: 1px solid #4c6a99; padding: 54px 60px 0 65px; color: #1a1a1a; font: 11px/13px "Liberation Serif", serif; white-space: nowrap; }
.under, .over { position: absolute; left: 0; top: 0; width: 551px; height: 497px; }
.page p, .page ul, .figure, .park { position: relative; margin: 0; padding: 0; }
.page .lead { margin: 8px 0 19px; }
.figure { display: grid; grid-template-columns: 201px 45px; column-gap: 11px; row-gap: 9px; margin-left: 11px; align-items: center; margin-bottom: 19px; }
.rect { height: 105px; border: 1px solid #555; }
.dim { height: 21px; border: 1px solid #444; text-align: center; line-height: 19px; margin-top: -16px; }
.low { width: 45px; margin: 0 0 0 71px; padding-right: 6px; }
.page ul { list-style: none; padding-top: 8px; margin-bottom: 28px; line-height: 13px; }
.sp { text-decoration: underline wavy #e06060 1px; text-decoration-skip-ink: none; }
.park { width: 422px; height: 85px; margin-top: 10px; font-size: 11px; fill: #1a1a1a; }
.scroll { width: 11px; display: flex; flex-direction: column; align-items: center; background: #b9d1f4; padding-top: 2px; gap: 3px; }
.scroll svg { width: 10px; height: 10px; }
.split { width: 6px; height: 2px; background: #345; }
.track { flex: 1; width: 11px; display: flex; flex-direction: column; align-items: center; justify-content: space-between; background: linear-gradient(90deg, #7f9dca, #93afd9); color: #345; }
.thumb { width: 10px; height: 34px; margin-bottom: 170px; border: 1px solid #8fa5c8; border-radius: 1px; background: linear-gradient(90deg, #eef3fb, #c9d6ea); }
.flip { transform: rotate(180deg); }

.status { height: 17px; display: flex; align-items: center; background: linear-gradient(#e4eefb, #b4cff2 45%, #dbe9fd); border-top: 1px solid #6a8bbd; color: #34558f; padding-right: 3px; }
.status > span { padding: 0 5px; line-height: 14px; border-right: 1px solid #a9c3e8; white-space: nowrap; }
.status > span svg { width: 14px; height: 12px; }
.status .proof { border-right: 0; }
.status .lang { padding-left: 6px; }
.views { display: flex; margin-left: auto; }
.views button { width: 13px; height: 13px; }
.views svg { width: 10px; height: 10px; }
.status label { padding: 0 5px; }
.round { width: 12px; height: 12px; border-radius: 6px; border: 1px solid #62799f; background: #eef3fb; font-size: 11px; line-height: 8px; color: #333; }
.status input { appearance: none; width: 76px; height: 12px; margin: 0; background: linear-gradient(transparent 5px, #7690bd 5px, #7690bd 6px, transparent 6px); }
.status input::-webkit-slider-thumb { appearance: none; width: 7px; height: 9px; border: 1px solid #6b7fa3; border-radius: 1px 1px 4px 4px; background: #edf3fb; }

.taskbar { height: 29px; display: flex; background: linear-gradient(90deg, #241917, #17100f 35%, #080808 50%, #0c0c0c 72%, #2b2826 82%, #15100f 95%, #2b2725); color: #fff; }
.startb { width: 36px; }
.startb svg { width: 13px; height: 13px; }
.search { width: 258px; display: flex; align-items: center; gap: 6px; padding: 0 10px 0 6px; background: #f2f2f2; }
.search svg { width: 18px; height: 18px; }
.search .mic { width: 12px; height: 14px; }
.search input { flex: 1; min-width: 0; border: 0; padding: 0; background: none; font: 10px/14px "Open Sans", sans-serif; color: #444; }
.search input::placeholder { color: #444; opacity: 1; }
.apps { display: flex; width: 412px; }
.apps button { flex: 1; position: relative; }
.apps svg { width: 17px; height: 17px; }
.apps .open::after { content: ""; position: absolute; bottom: 0; left: 3px; right: 3px; height: 2px; background: #f2c9a5; }
.apps .active { background: #3b3b3b; }
.apps .active::after { left: 0; right: 0; }
.apps em { position: absolute; left: 15px; top: 13px; height: 13px; padding: 0 2px; border: 1px solid #777; border-radius: 7px; background: #333; font: bold 8px/11px "Open Sans", sans-serif; }
.tray { margin-left: auto; display: flex; align-items: center; gap: 4px; padding-right: 17px; }
.tray svg { width: 14px; height: 14px; }
.tray .far { margin-right: 9px; }
.inkbox { width: 24px; height: 29px; display: flex; align-items: center; justify-content: center; background: #383432; }
.tray b, .tray time { font: 9px/14px "Open Sans", sans-serif; }
.tray time { width: 50px; text-align: center; }
.tray .nt { margin-left: 4px; }

/* sketch toolbar */
.tools { position: absolute; top: 0; right: 0; height: 40px; display: flex; background: #e6e6e6; color: #222; }
.tools button { width: 40px; height: 40px; position: relative; }
.tools svg { width: 16px; height: 16px; }
.tools hr { width: 1px; height: 40px; margin: 0; border: 0; background: #aaa; }
.tools .on { border-bottom: 2px solid #d07c2c; padding-top: 2px; }
.tools .green { color: #18c61c; }
.tools .red { color: #d3202a; }
.tools .green i { position: absolute; bottom: 4px; left: 17px; width: 5px; height: 5px; border: solid #d07c2c; border-width: 0 1px 1px 0; transform: rotate(45deg); }
.tools .dim-btn { color: #999; }
.tools .dim-btn svg { transform: scaleX(-1); }
.tools .shut { background: #e81123; color: #fff; }
```
